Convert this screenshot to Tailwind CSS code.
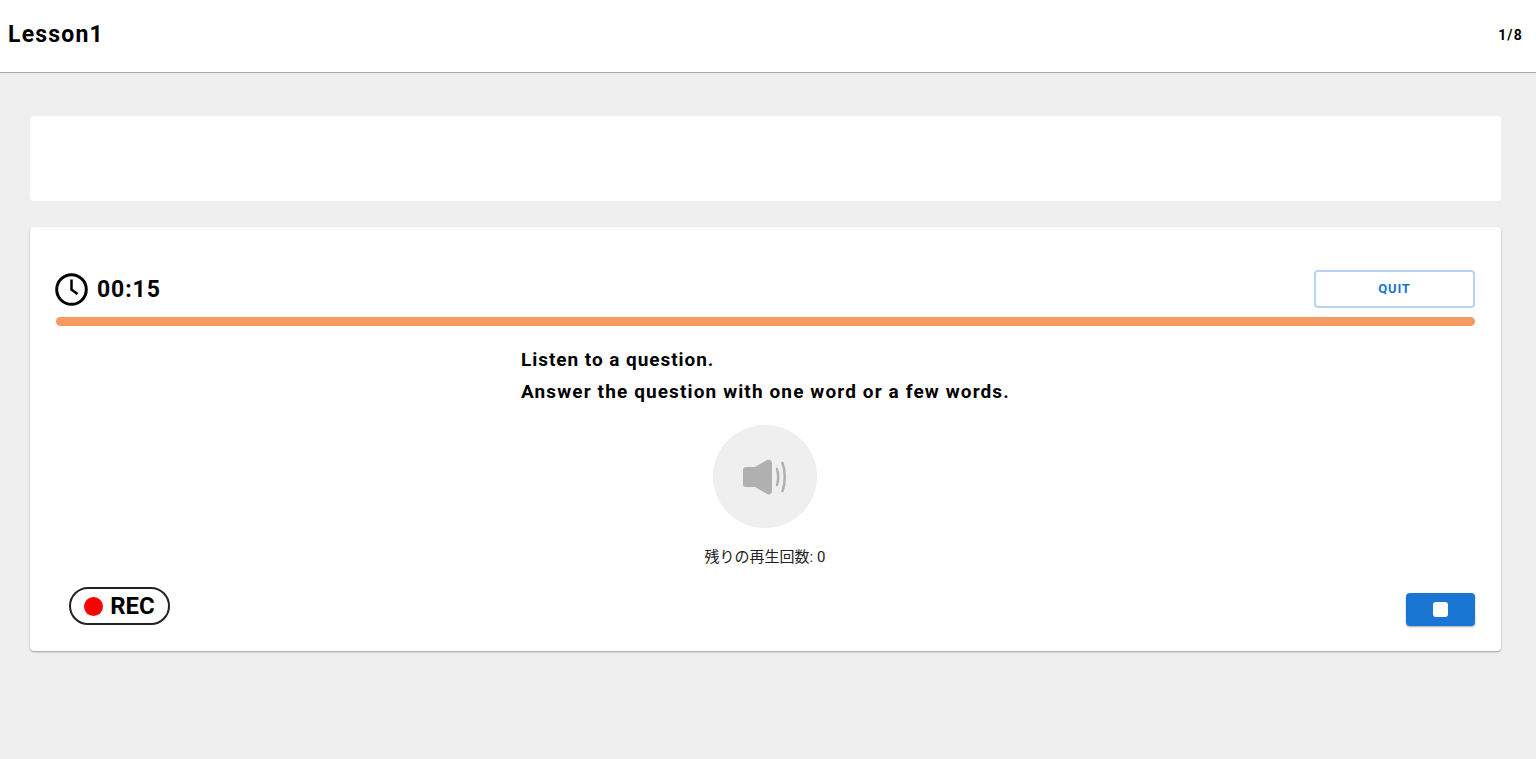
<!DOCTYPE html>
<html lang="en">
<head>
    <meta charset="UTF-8">
    <title>Lesson1</title>
    <script src="https://cdn.jsdelivr.net/npm/@tailwindcss/browser@4"></script>
</head>
<body class="h-[759px] overflow-hidden bg-[#efefef] font-['Roboto','Noto_Sans_CJK_JP',sans-serif] text-black">
    <!-- header -->
    <header class="flex h-[73px] items-center justify-between border-b border-[#a8a8a8] bg-white pb-[2px] pl-2 pr-[13px]">
        <h1 class="text-[23px] font-bold tracking-[1.2px]">Lesson1</h1>
        <span class="text-sm font-bold tracking-[1.2px]">1/8</span>
    </header>

    <main class="flex flex-col gap-[26px] pl-[30px] pr-[35px] pt-[43px]">
        <div class="h-[85px] rounded bg-white"></div>

        <section class="h-[424px] rounded bg-white px-[26px] pt-[43px] shadow-[0_1px_2px_rgba(0,0,0,0.35)]">
            <!-- timer row -->
            <div class="flex h-[38px] items-center justify-between">
                <div class="-ml-px flex items-center gap-[9px]">
                    <svg class="h-[33px] w-[33px]" viewBox="0 0 33 33" fill="none" stroke="black" stroke-width="3">
                        <circle cx="16.5" cy="16.5" r="14.800"/>
                        <path d="M16.500 6.500v10l6 4.500" stroke-width="2.500"/>
                    </svg>
                    <span class="mt-[2px] text-[23px] font-bold tracking-[0.9px]">00:15</span>
                </div>
                <button class="h-[38px] w-[161px] rounded border-2 border-[#b8d3f7] text-[13px] font-bold tracking-[0.8px] text-[#1976d2]">QUIT</button>
            </div>
            <div class="mt-[9px] h-[9px] rounded-full bg-[#f79a62]"></div>

            <!-- question -->
            <div class="ml-[465px] mt-[18px] text-[19px] font-bold leading-[32px]">
                <p class="tracking-[0.95px]">Listen to a question.</p>
                <p class="tracking-[1.12px]">Answer the question with one word or a few words.</p>
            </div>
            <div class="mt-[17px] flex flex-col items-center pr-px">
                <div class="flex h-[103px] w-[104px] items-center justify-center rounded-full bg-[#efefef]">
                    <svg class="h-[36px] w-[44px]" viewBox="0 0 44 36" fill="#b0b0b0">
                        <path d="M3 8h9L24 1c2-1 5 0 5 3v28c0 3-3 4-5 3L12 28H3c-2 0-3-1-3-3V11c0-2 1-3 3-3z"/>
                        <path d="M34 10c1.500 5 1.500 11 0 16M39.500 4c3 8 3 20 0 28" fill="none" stroke="#b0b0b0" stroke-width="2.500" stroke-linecap="round"/>
                    </svg>
                </div>
                <p class="mt-[19px] text-[15px] leading-[20px] text-[#222]">残りの再生回数: 0</p>
            </div>

            <!-- bottom row -->
            <div class="mt-[20px] flex items-start justify-between">
                <div class="ml-[13px] flex h-[38px] w-[101px] items-center justify-center gap-[7px] rounded-full border-2 border-[#222]">
                    <span class="h-[19px] w-[19px] rounded-full bg-[#ff0000]"></span>
                    <span class="text-[24px] font-bold">REC</span>
                </div>
                <button class="mt-[6px] flex h-[33px] w-[69px] items-center justify-center rounded bg-[#1976d2] shadow-[0_1px_2px_rgba(0,0,0,0.35)]">
                    <span class="h-[15px] w-[15px] rounded-[3px] bg-white"></span>
                </button>
            </div>
        </section>
    </main>
</body>
</html>
